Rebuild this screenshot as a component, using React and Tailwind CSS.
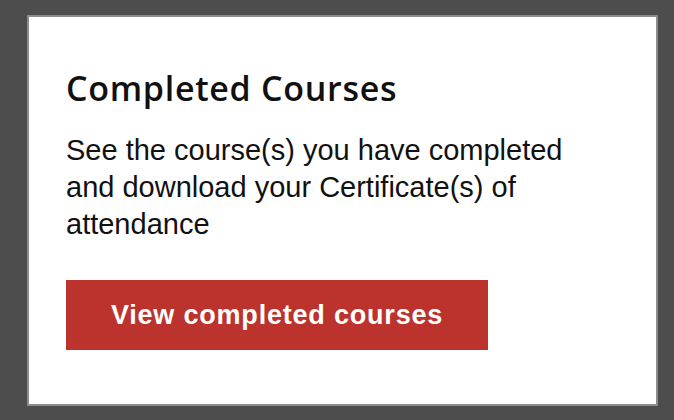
import React from 'react';

const App = () => {
  return (
    <div className="w-[674px] h-[420px] bg-[#4d4d4d] pt-[15px] pl-[27px]">
      <div className="w-[631px] h-[391px] bg-white border-2 border-[#8c8c8c] pl-[37px] pt-[51px]">
        <h2 className="text-[34px] leading-[40px] font-semibold text-[#111] font-['Open_Sans',sans-serif] tracking-[0.7px]">
          Completed Courses
        </h2>
        <p className="mt-[24px] w-[530px] text-[29px] leading-[37px] text-[#111] font-['Liberation_Sans',Arial,sans-serif]">
          See the course(s) you have completed and download your Certificate(s) of attendance
        </p>
        <button className="mt-[37px] block w-[422px] h-[70px] bg-[#bc322c] text-white text-[27px] font-bold font-['Liberation_Sans',Arial,sans-serif] tracking-[0.8px]">
          View completed courses
        </button>
      </div>
    </div>
  );
};

export default App;
